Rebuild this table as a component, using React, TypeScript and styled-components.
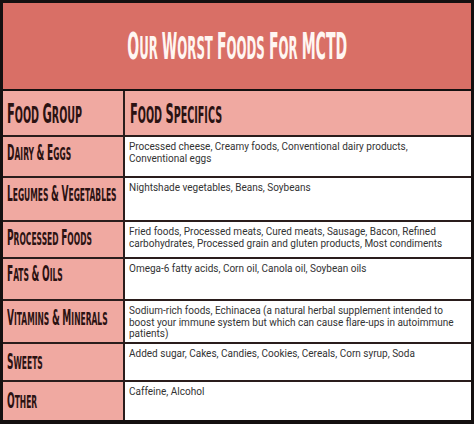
import styled, { createGlobalStyle } from "styled-components";

const GlobalStyle = createGlobalStyle`
  html, body {
    margin: 0;
    padding: 0;
    background: #ffffff;
  }
`;

const color = {
  frame: "#141010",
  line: "#2a1d1c",
  title: "#d96f66",
  pink: "#f0a9a1",
  white: "#ffffff",
  ink: "#2b1212",
  text: "#333333",
};

const capsFont = `"Liberation Sans Narrow", "DejaVu Sans Condensed", "Liberation Sans", sans-serif`;

type Row = { group: string; lines: string[]; height: number; lift: number };

const rows: Row[] = [
  {
    group: "Dairy & Eggs",
    lines: ["Processed cheese, Creamy foods, Conventional dairy products,", "Conventional eggs"],
    height: 39,
    lift: 8,
  },
  { group: "Legumes & Vegetables", lines: ["Nightshade vegetables, Beans, Soybeans"], height: 42, lift: 10 },
  {
    group: "Processed Foods",
    lines: [
      "Fried foods, Processed meats, Cured meats, Sausage, Bacon, Refined",
      "carbohydrates, Processed grain and gluten products, Most condiments",
    ],
    height: 35,
    lift: 4,
  },
  { group: "Fats & Oils", lines: ["Omega-6 fatty acids, Corn oil, Canola oil, Soybean oils"], height: 40, lift: 10 },
  {
    group: "Vitamins & Minerals",
    lines: [
      "Sodium-rich foods, Echinacea (a natural herbal supplement intended to",
      "boost your immune system but which can cause flare-ups in autoimmune",
      "patients)",
    ],
    height: 41,
    lift: 8,
  },
  { group: "Sweets", lines: ["Added sugar, Cakes, Candies, Cookies, Cereals, Corn syrup, Soda"], height: 36, lift: 0 },
  { group: "Other", lines: ["Caffeine, Alcohol"], height: 38, lift: 0 },
];

// split "Food Group" into runs: capitals stay full size, the rest become smaller capitals
const capRuns = (text: string) => {
  const runs: { big: boolean; text: string }[] = [];
  for (const ch of text) {
    const big = ch !== ch.toLowerCase() || ch === "&";
    const last = runs[runs.length - 1];
    if (last && last.big === big) last.text += ch;
    else runs.push({ big, text: ch });
  }
  return runs;
};

const SmallCaps = ({ text, size, squeeze, centered }: { text: string; size: number; squeeze: number; centered?: boolean }) => (
  <Caps $size={size} $squeeze={squeeze} $centered={centered}>
    {capRuns(text).map((run, i) =>
      run.big ? <span key={i}>{run.text}</span> : <Lower key={i}>{run.text}</Lower>
    )}
  </Caps>
);

const App = () => {
  return (
    <>
      <GlobalStyle />
      <Frame>
        <Title>
          <SmallCaps text="Our Worst Foods For MCTD" size={38} squeeze={0.41} centered />
        </Title>
        <Table>
          <GroupCell $height={44}>
            <SmallCaps text="Food Group" size={27} squeeze={0.47} />
          </GroupCell>
          <HeadCell $height={44}>
            <SmallCaps text="Food Specifics" size={27} squeeze={0.47} />
          </HeadCell>
          {rows.map((row) => (
            <RowPair key={row.group} row={row} />
          ))}
        </Table>
      </Frame>
    </>
  );
};

const RowPair = ({ row }: { row: Row }) => (
  <>
    <GroupCell $height={row.height} $lift={row.lift}>
      <SmallCaps text={row.group} size={22} squeeze={0.455} />
    </GroupCell>
    <SpecCell $height={row.height}>
      {row.lines.map((line) => (
        <Line key={line}>{line}</Line>
      ))}
    </SpecCell>
  </>
);

const Frame = styled.main`
  width: 474px;
  height: 424px;
  box-sizing: border-box;
  padding: 3px 3px 4px 3px;
  background-color: ${color.frame};
  display: flex;
  flex-direction: column;
  gap: 2px;
  overflow: hidden;
`;

const Title = styled.header`
  height: 86px;
  flex-shrink: 0;
  background-color: ${color.title};
  color: #fff6f2;
  display: flex;
  align-items: center;
  justify-content: center;
`;

const Table = styled.section`
  flex: 1;
  display: grid;
  grid-template-columns: 120px minmax(0, 1fr);
  gap: 2px;
  background-color: ${color.line};
`;

const Caps = styled.span<{ $size: number; $squeeze: number; $centered?: boolean }>`
  display: inline-block;
  font-family: ${capsFont};
  font-weight: 700;
  font-size: ${(p) => p.$size}px;
  line-height: 1;
  white-space: nowrap;
  transform: scaleX(${(p) => p.$squeeze});
  transform-origin: ${(p) => (p.$centered ? "center" : "left center")};
`;

const Lower = styled.span`
  text-transform: uppercase;
  font-size: 0.84em;
`;

const GroupCell = styled.div<{ $height: number; $lift?: number }>`
  height: ${(p) => p.$height}px;
  box-sizing: border-box;
  background-color: ${color.pink};
  color: ${color.ink};
  display: flex;
  align-items: center;
  padding-left: 4px;
  padding-bottom: ${(p) => p.$lift ?? 0}px;
  overflow: visible;
`;

const HeadCell = styled(GroupCell)`
  padding-left: 5px;
`;

const SpecCell = styled.div<{ $height: number }>`
  height: ${(p) => p.$height}px;
  box-sizing: border-box;
  background-color: ${color.white};
  padding: 4px 0 0 4px;
`;

const Line = styled.div`
  font-family: Roboto, "Liberation Sans", sans-serif;
  font-size: 10px;
  line-height: 11.5px;
  color: ${color.text};
  white-space: nowrap;
`;

export default App;
